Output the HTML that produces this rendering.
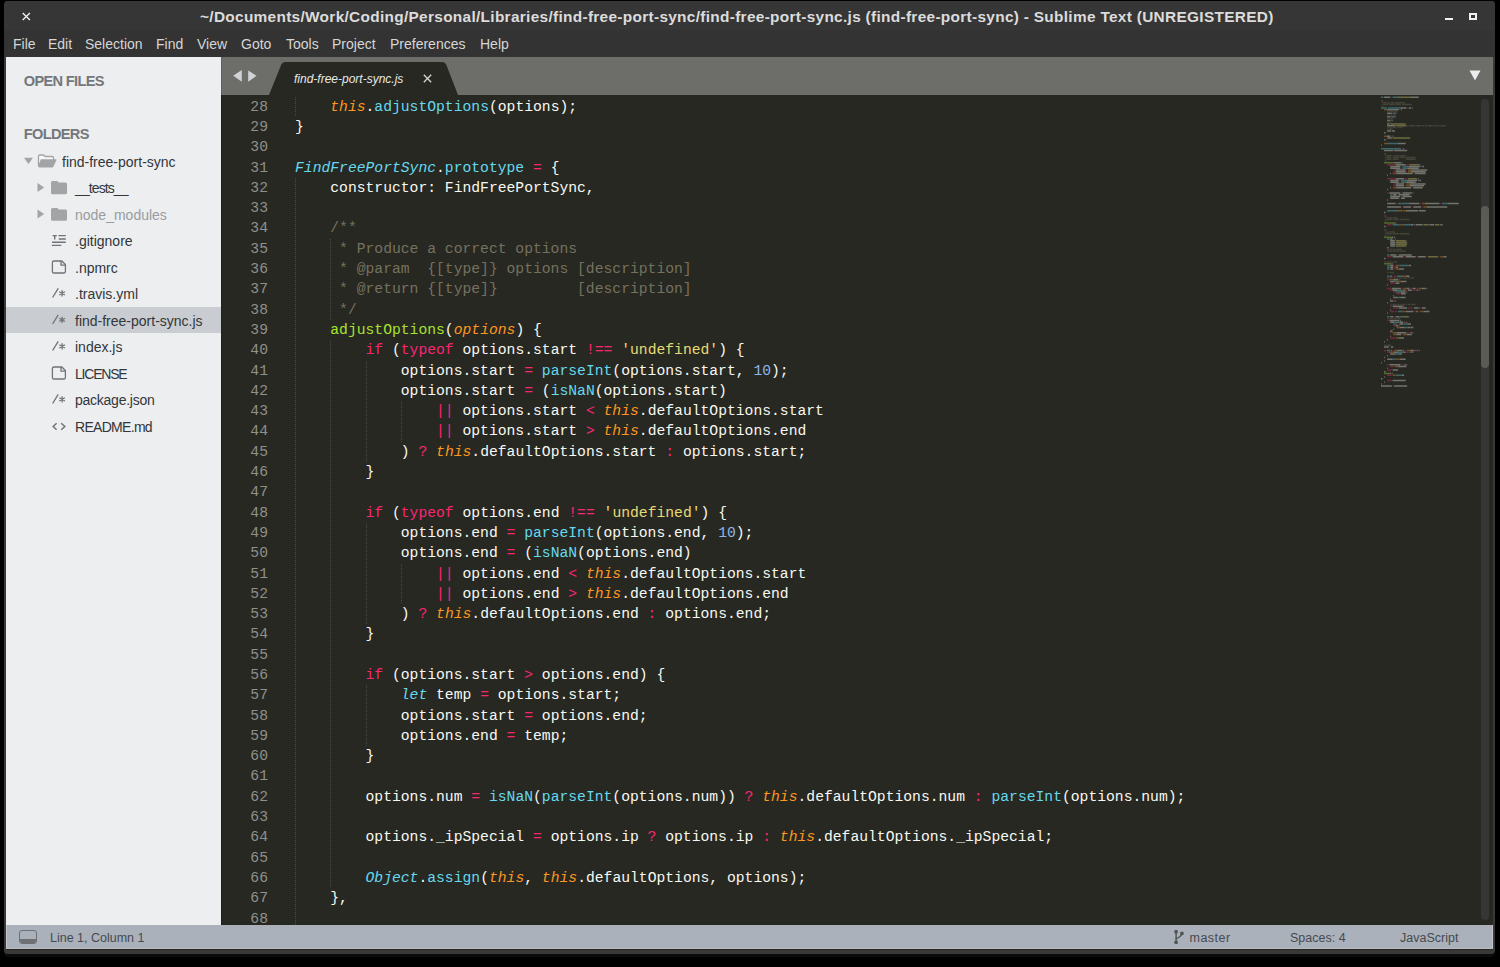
<!DOCTYPE html>
<html><head><meta charset="utf-8">
<style>
html,body{margin:0;padding:0;}
body{width:1500px;height:967px;background:#000;position:relative;overflow:hidden;font-family:"Liberation Sans",sans-serif;}
.abs{position:absolute;}
#win{position:absolute;left:4px;top:1px;width:1491px;height:953px;background:#393939;border-radius:4px 4px 4px 4px;overflow:hidden;box-shadow:0 3px 0 #0b0b0b;}
#tbar{position:absolute;left:4px;top:1px;width:1491px;height:29px;background:#363636;border-radius:4px 4px 0 0;}
#mbar{position:absolute;left:4px;top:30px;width:1491px;height:27px;background:#333333;}
#title{position:absolute;left:200px;top:8px;font-weight:bold;font-size:15.4px;color:#dcdcdc;white-space:pre;letter-spacing:0.31px;}
.menu{position:absolute;top:36px;font-size:14px;color:#d6d6d6;white-space:pre;}
#sidebar{position:absolute;left:6px;top:57px;width:215px;height:868px;background:#eceef0;}
.sbh{position:absolute;left:23.8px;font-weight:bold;font-size:14.6px;color:#74777b;letter-spacing:-0.68px;white-space:pre;}
.item{position:absolute;font-size:14px;color:#33363a;white-space:pre;}
#sel{position:absolute;left:6px;top:307px;width:215px;height:26px;background:#c9cdd1;}
#editor{position:absolute;left:221px;top:57px;width:1272px;height:868px;background:#272822;}
#tabbar{position:absolute;left:221px;top:57px;width:1272px;height:38px;background:#6d6e69;}
#code{position:absolute;left:295px;top:96.7px;margin:0;font-family:"Liberation Mono",monospace;font-size:14.706px;line-height:20.3px;color:#f8f8f2;white-space:pre;}
#gutter{position:absolute;left:200px;width:68px;text-align:right;top:96.7px;margin:0;font-family:"Liberation Mono",monospace;font-size:14.706px;line-height:20.3px;color:#90908a;white-space:pre;}
.k{color:#f92672}.s{color:#e6db74}.n{color:#8fb4ea}.f{color:#66d9ef}.fi{color:#66d9ef;font-style:italic}
.t{color:#fd971f;font-style:italic}.g{color:#a6e22e}.c{color:#75715e}
.guide{position:absolute;width:1px;background-image:linear-gradient(to bottom,#4a4b44 50%,transparent 50%);background-size:1px 2px;}
#status{position:absolute;left:6px;top:925px;width:1485px;height:23px;background:#abb1ba;border-left:1px solid #c2c6cc;border-right:1px solid #c2c6cc;}
.st{position:absolute;top:930.5px;font-size:12.5px;color:#464a50;white-space:pre;}
</style></head>
<body>
<div id="win"></div><div id="tbar"></div><div id="mbar"></div>
<!-- title bar -->
<svg class="abs" style="left:21px;top:11px" width="11" height="11" viewBox="0 0 11 11"><path d="M1.7 1.9L8.9 9.1M8.9 1.9L1.7 9.1" stroke="#f0f0f0" stroke-width="1.35"/></svg>
<div id="title">~/Documents/Work/Coding/Personal/Libraries/find-free-port-sync/find-free-port-sync.js (find-free-port-sync) - Sublime Text (UNREGISTERED)</div>
<div class="abs" style="left:1445px;top:18px;width:8px;height:2px;background:#f0f0f0"></div>
<div class="abs" style="left:1469px;top:12.8px;width:4px;height:3.6px;border:2px solid #f0f0f0"></div>
<!-- menu -->
<div class="menu" style="left:13px">File</div>
<div class="menu" style="left:48px">Edit</div>
<div class="menu" style="left:85px">Selection</div>
<div class="menu" style="left:156px">Find</div>
<div class="menu" style="left:197px">View</div>
<div class="menu" style="left:241px">Goto</div>
<div class="menu" style="left:286px">Tools</div>
<div class="menu" style="left:332px">Project</div>
<div class="menu" style="left:390px">Preferences</div>
<div class="menu" style="left:480px">Help</div>
<!-- sidebar -->
<div id="sidebar"></div>
<div id="sel"></div>
<div class="sbh" style="top:73.2px">OPEN FILES</div>
<div class="sbh" style="top:126.2px">FOLDERS</div>
<!-- tree -->
<svg class="abs" style="left:0;top:0" width="221" height="450">
  <g fill="#a3a4a5">
    <path d="M24 157.8L33 157.8L28.5 164Z"/>
    <path d="M37.5 183L44.2 187.4L37.5 191.9Z"/>
    <path d="M37.5 209.6L44.2 214L37.5 218.5Z"/>
    <!-- folders -->
    <path d="M51 182.5Q51 181 52.5 181L57.5 181L58.5 182.5L65.5 182.5Q67 182.5 67 184L67 192.8Q67 194.3 65.5 194.3L52.5 194.3Q51 194.3 51 192.8Z"/>
    <path d="M51 209.5Q51 208 52.5 208L57.5 208L58.5 209.5L65.5 209.5Q67 209.5 67 211L67 219.2Q67 220.7 65.5 220.7L52.5 220.7Q51 220.7 51 219.2Z"/>
  </g>
  <!-- open folder -->
  <path d="M38.5 166L38.5 156.5Q38.5 155 40 155L43.5 155L45 156.5L52 156.5Q53.5 156.5 53.5 158L53.5 160" fill="#f7f8f9" stroke="#a3a4a5" stroke-width="1.3"/>
  <path d="M40.8 159.3L55.8 159.3Q56.8 159.3 56.4 160.3L53.5 166.5Q53.1 167.4 52 167.4L39.5 167.4Q37.8 167.4 38.2 166Z" fill="#a3a4a5"/>
  <g stroke="#707377" fill="none" stroke-width="1.4" stroke-linecap="butt">
    <!-- gitignore -->
    <path d="M58.5 235.6L65.8 235.6M58.8 239L65.8 239M52 242.3L65.8 242.3M51.8 245.4L61.3 245.4"/>
    <path d="M52.6 235.6L56.8 235.6M54.7 235.6L54.7 239.5"/>
    <!-- file icons -->
    <path d="M52.4 262.5Q52.4 261 54 261L61.8 261L65.4 264.6L65.4 271.4Q65.4 273 63.8 273L54 273Q52.4 273 52.4 271.4Z" stroke-width="1.3"/>
    <path d="M61 261L61 265.2L65.4 265.2" stroke-width="1.3"/>
    <path d="M52.4 368.5Q52.4 367 54 367L61.8 367L65.4 370.6L65.4 377.4Q65.4 379 63.8 379L54 379Q52.4 379 52.4 377.4Z" stroke-width="1.3"/>
    <path d="M61 367L61 371.2L65.4 371.2" stroke-width="1.3"/>
    <!-- readme <> -->
    <path d="M56.6 423.2L53.2 426.5L56.6 429.8M61.2 423.2L64.8 426.5L61.2 429.8" stroke-width="1.5"/>
  </g>
  <g id="jsicon" stroke="#707377" fill="none" stroke-width="1.3">
    <path d="M52.6 297.5L58.2 288.4"/>
    <path d="M62.1 290.2L62.1 296.6M59.3 291.8L64.9 295M59.3 295L64.9 291.8"/>
  </g>
  <use href="#jsicon" y="26.5"/>
  <use href="#jsicon" y="53"/>
  <use href="#jsicon" y="106"/>
</svg>
<div class="item" style="left:62px;top:154px">find-free-port-sync</div>
<div class="item" style="left:75px;top:180px"><span style="letter-spacing:-0.9px">__tests__</span></div>
<div class="item" style="left:75px;top:207px;color:#9a9c9f">node_modules</div>
<div class="item" style="left:75px;top:233px">.gitignore</div>
<div class="item" style="left:75px;top:260px">.npmrc</div>
<div class="item" style="left:75px;top:286px">.travis.yml</div>
<div class="item" style="left:75px;top:313px">find-free-port-sync.js</div>
<div class="item" style="left:75px;top:339px">index.js</div>
<div class="item" style="left:75px;top:366px"><span style="letter-spacing:-1.2px">LICENSE</span></div>
<div class="item" style="left:75px;top:392px"><span style="letter-spacing:-0.25px">package.json</span></div>
<div class="item" style="left:75px;top:419px"><span style="letter-spacing:-0.7px">README.md</span></div>
<!-- editor -->
<div id="editor"></div>
<div id="tabbar"></div>
<div class="abs" style="left:221px;top:57px;width:1px;height:38px;background:#5d5f62"></div><div class="abs" style="left:221px;top:95px;width:1px;height:830px;background:#221f1b"></div>
<svg class="abs" style="left:221px;top:57px" width="1272" height="38">
  <path d="M48 38L60.5 7Q62 5 64.5 5L221 5Q223.5 5 225 7L237 38Z" fill="#272822"/>
  <path d="M12.2 18.8L20.8 13L20.8 24.8Z" fill="#d0d2d5"/>
  <path d="M27.2 13.4L35.5 18.8L27.2 24.8Z" fill="#d0d2d5"/>
  <path d="M202.8 17.8L210.2 25.2M210.2 17.8L202.8 25.2" stroke="#d5d5d3" stroke-width="1.3"/>
  <path d="M1248.5 13.5L1259.5 13.5L1254 23.5Z" fill="#ececec"/>
</svg>
<div class="abs" style="left:294px;top:72px;font-size:12px;font-style:italic;color:#e8e8e6;white-space:pre">find-free-port-sync.js</div>
<div class="guide" style="left:295.0px;top:96.7px;height:20.3px"></div>
<div class="guide" style="left:295.0px;top:177.9px;height:751.1px"></div>
<div class="guide" style="left:330.3px;top:238.8px;height:81.2px"></div>
<div class="guide" style="left:330.3px;top:340.3px;height:548.1px"></div>
<div class="guide" style="left:365.6px;top:360.6px;height:101.5px"></div>
<div class="guide" style="left:365.6px;top:523.0px;height:101.5px"></div>
<div class="guide" style="left:365.6px;top:685.4px;height:60.9px"></div>
<div class="guide" style="left:400.9px;top:401.2px;height:40.6px"></div>
<div class="guide" style="left:400.9px;top:563.6px;height:40.6px"></div>
<pre id="gutter">28
29
30
31
32
33
34
35
36
37
38
39
40
41
42
43
44
45
46
47
48
49
50
51
52
53
54
55
56
57
58
59
60
61
62
63
64
65
66
67
68</pre>
<pre id="code">    <span class="t">this</span>.<span class="f">adjustOptions</span>(options);
}

<span class="fi">FindFreePortSync</span>.<span class="f">prototype</span> <span class="k">=</span> {
    constructor: FindFreePortSync,

    <span class="c">/**</span>
    <span class="c"> * Produce a correct options</span>
    <span class="c"> * @param  {[type]} options [description]</span>
    <span class="c"> * @return {[type]}         [description]</span>
    <span class="c"> */</span>
    <span class="g">adjustOptions</span>(<span class="t">options</span>) {
        <span class="k">if</span> (<span class="k">typeof</span> options.start <span class="k">!==</span> <span class="s">'undefined'</span>) {
            options.start <span class="k">=</span> <span class="f">parseInt</span>(options.start, <span class="n">10</span>);
            options.start <span class="k">=</span> (<span class="f">isNaN</span>(options.start)
                <span class="k">||</span> options.start <span class="k">&lt;</span> <span class="t">this</span>.defaultOptions.start
                <span class="k">||</span> options.start <span class="k">&gt;</span> <span class="t">this</span>.defaultOptions.end
            ) <span class="k">?</span> <span class="t">this</span>.defaultOptions.start <span class="k">:</span> options.start;
        }

        <span class="k">if</span> (<span class="k">typeof</span> options.end <span class="k">!==</span> <span class="s">'undefined'</span>) {
            options.end <span class="k">=</span> <span class="f">parseInt</span>(options.end, <span class="n">10</span>);
            options.end <span class="k">=</span> (<span class="f">isNaN</span>(options.end)
                <span class="k">||</span> options.end <span class="k">&lt;</span> <span class="t">this</span>.defaultOptions.start
                <span class="k">||</span> options.end <span class="k">&gt;</span> <span class="t">this</span>.defaultOptions.end
            ) <span class="k">?</span> <span class="t">this</span>.defaultOptions.end <span class="k">:</span> options.end;
        }

        <span class="k">if</span> (options.start <span class="k">&gt;</span> options.end) {
            <span class="fi">let</span> temp <span class="k">=</span> options.start;
            options.start <span class="k">=</span> options.end;
            options.end <span class="k">=</span> temp;
        }

        options.num <span class="k">=</span> <span class="f">isNaN</span>(<span class="f">parseInt</span>(options.num)) <span class="k">?</span> <span class="t">this</span>.defaultOptions.num <span class="k">:</span> <span class="f">parseInt</span>(options.num);

        options._ipSpecial <span class="k">=</span> options.ip <span class="k">?</span> options.ip <span class="k">:</span> <span class="t">this</span>.defaultOptions._ipSpecial;

        <span class="fi">Object</span>.<span class="f">assign</span>(<span class="t">this</span>, <span class="t">this</span>.defaultOptions, options);
    },
</pre>
<svg class="abs" style="left:0;top:0" width="1500" height="967"><g opacity="0.36"><path fill="#f8f8f2" d="M1384.08 96.62h6.16v1.5h-6.16zM1397.94 96.62h0.77v1.5h-0.77zM1410.26 96.62h0.77v1.5h-0.77zM1411.03 96.62h0.77v1.5h-0.77zM1411.80 96.62h6.16v1.5h-6.16zM1417.96 96.62h0.77v1.5h-0.77zM1400.25 107.24h0.77v1.5h-0.77zM1401.02 107.24h5.39v1.5h-5.39zM1408.72 107.24h0.77v1.5h-0.77zM1409.49 107.24h0.77v1.5h-0.77zM1410.26 107.24h0.77v1.5h-0.77zM1411.80 107.24h0.77v1.5h-0.77zM1387.16 109.01h0.77v1.5h-0.77zM1387.93 109.01h10.78v1.5h-10.78zM1401.02 109.01h0.77v1.5h-0.77zM1387.16 112.55h3.85v1.5h-3.85zM1391.01 112.55h0.77v1.5h-0.77zM1395.63 112.55h0.77v1.5h-0.77zM1387.16 116.09h2.31v1.5h-2.31zM1389.47 116.09h0.77v1.5h-0.77zM1394.86 116.09h0.77v1.5h-0.77zM1387.16 119.63h2.31v1.5h-2.31zM1389.47 119.63h0.77v1.5h-0.77zM1391.78 119.63h0.77v1.5h-0.77zM1387.16 123.17h1.54v1.5h-1.54zM1388.70 123.17h0.77v1.5h-0.77zM1404.87 123.17h0.77v1.5h-0.77zM1387.16 124.94h7.70v1.5h-7.70zM1394.86 124.94h0.77v1.5h-0.77zM1405.64 124.94h0.77v1.5h-0.77zM1387.16 130.25h3.08v1.5h-3.08zM1390.24 130.25h0.77v1.5h-0.77zM1391.78 130.25h3.08v1.5h-3.08zM1384.08 132.02h0.77v1.5h-0.77zM1384.85 132.02h0.77v1.5h-0.77zM1387.16 135.56h0.77v1.5h-0.77zM1387.93 135.56h2.31v1.5h-2.31zM1392.55 135.56h0.77v1.5h-0.77zM1387.16 137.33h3.85v1.5h-3.85zM1391.01 137.33h0.77v1.5h-0.77zM1384.08 139.10h0.77v1.5h-0.77zM1384.85 139.10h0.77v1.5h-0.77zM1387.16 142.64h0.77v1.5h-0.77zM1397.94 142.64h0.77v1.5h-0.77zM1398.71 142.64h5.39v1.5h-5.39zM1404.10 142.64h0.77v1.5h-0.77zM1404.87 142.64h0.77v1.5h-0.77zM1381.00 144.41h0.77v1.5h-0.77zM1393.32 147.95h0.77v1.5h-0.77zM1403.33 147.95h0.77v1.5h-0.77zM1384.08 149.72h8.47v1.5h-8.47zM1392.55 149.72h0.77v1.5h-0.77zM1394.09 149.72h12.32v1.5h-12.32zM1406.41 149.72h0.77v1.5h-0.77zM1394.09 162.11h0.77v1.5h-0.77zM1394.86 162.11h5.39v1.5h-5.39zM1400.25 162.11h0.77v1.5h-0.77zM1401.79 162.11h0.77v1.5h-0.77zM1389.47 163.88h0.77v1.5h-0.77zM1395.63 163.88h5.39v1.5h-5.39zM1401.02 163.88h0.77v1.5h-0.77zM1401.79 163.88h3.85v1.5h-3.85zM1417.96 163.88h0.77v1.5h-0.77zM1419.50 163.88h0.77v1.5h-0.77zM1390.24 165.65h5.39v1.5h-5.39zM1395.63 165.65h0.77v1.5h-0.77zM1396.40 165.65h3.85v1.5h-3.85zM1408.72 165.65h0.77v1.5h-0.77zM1409.49 165.65h5.39v1.5h-5.39zM1414.88 165.65h0.77v1.5h-0.77zM1415.65 165.65h3.85v1.5h-3.85zM1419.50 165.65h0.77v1.5h-0.77zM1422.58 165.65h0.77v1.5h-0.77zM1423.35 165.65h0.77v1.5h-0.77zM1390.24 167.42h5.39v1.5h-5.39zM1395.63 167.42h0.77v1.5h-0.77zM1396.40 167.42h3.85v1.5h-3.85zM1402.56 167.42h0.77v1.5h-0.77zM1407.18 167.42h0.77v1.5h-0.77zM1407.95 167.42h5.39v1.5h-5.39zM1413.34 167.42h0.77v1.5h-0.77zM1414.11 167.42h3.85v1.5h-3.85zM1417.96 167.42h0.77v1.5h-0.77zM1395.63 169.19h5.39v1.5h-5.39zM1401.02 169.19h0.77v1.5h-0.77zM1401.79 169.19h3.85v1.5h-3.85zM1411.03 169.19h0.77v1.5h-0.77zM1411.80 169.19h10.78v1.5h-10.78zM1422.58 169.19h0.77v1.5h-0.77zM1423.35 169.19h3.85v1.5h-3.85zM1395.63 170.96h5.39v1.5h-5.39zM1401.02 170.96h0.77v1.5h-0.77zM1401.79 170.96h3.85v1.5h-3.85zM1411.03 170.96h0.77v1.5h-0.77zM1411.80 170.96h10.78v1.5h-10.78zM1422.58 170.96h0.77v1.5h-0.77zM1423.35 170.96h2.31v1.5h-2.31zM1390.24 172.73h0.77v1.5h-0.77zM1396.40 172.73h0.77v1.5h-0.77zM1397.17 172.73h10.78v1.5h-10.78zM1407.95 172.73h0.77v1.5h-0.77zM1408.72 172.73h3.85v1.5h-3.85zM1414.88 172.73h5.39v1.5h-5.39zM1420.27 172.73h0.77v1.5h-0.77zM1421.04 172.73h3.85v1.5h-3.85zM1424.89 172.73h0.77v1.5h-0.77zM1387.16 174.50h0.77v1.5h-0.77zM1389.47 178.04h0.77v1.5h-0.77zM1395.63 178.04h5.39v1.5h-5.39zM1401.02 178.04h0.77v1.5h-0.77zM1401.79 178.04h2.31v1.5h-2.31zM1416.42 178.04h0.77v1.5h-0.77zM1417.96 178.04h0.77v1.5h-0.77zM1390.24 179.81h5.39v1.5h-5.39zM1395.63 179.81h0.77v1.5h-0.77zM1396.40 179.81h2.31v1.5h-2.31zM1407.18 179.81h0.77v1.5h-0.77zM1407.95 179.81h5.39v1.5h-5.39zM1413.34 179.81h0.77v1.5h-0.77zM1414.11 179.81h2.31v1.5h-2.31zM1416.42 179.81h0.77v1.5h-0.77zM1419.50 179.81h0.77v1.5h-0.77zM1420.27 179.81h0.77v1.5h-0.77zM1390.24 181.58h5.39v1.5h-5.39zM1395.63 181.58h0.77v1.5h-0.77zM1396.40 181.58h2.31v1.5h-2.31zM1401.02 181.58h0.77v1.5h-0.77zM1405.64 181.58h0.77v1.5h-0.77zM1406.41 181.58h5.39v1.5h-5.39zM1411.80 181.58h0.77v1.5h-0.77zM1412.57 181.58h2.31v1.5h-2.31zM1414.88 181.58h0.77v1.5h-0.77zM1395.63 183.35h5.39v1.5h-5.39zM1401.02 183.35h0.77v1.5h-0.77zM1401.79 183.35h2.31v1.5h-2.31zM1409.49 183.35h0.77v1.5h-0.77zM1410.26 183.35h10.78v1.5h-10.78zM1421.04 183.35h0.77v1.5h-0.77zM1421.81 183.35h3.85v1.5h-3.85zM1395.63 185.12h5.39v1.5h-5.39zM1401.02 185.12h0.77v1.5h-0.77zM1401.79 185.12h2.31v1.5h-2.31zM1409.49 185.12h0.77v1.5h-0.77zM1410.26 185.12h10.78v1.5h-10.78zM1421.04 185.12h0.77v1.5h-0.77zM1421.81 185.12h2.31v1.5h-2.31zM1390.24 186.89h0.77v1.5h-0.77zM1396.40 186.89h0.77v1.5h-0.77zM1397.17 186.89h10.78v1.5h-10.78zM1407.95 186.89h0.77v1.5h-0.77zM1408.72 186.89h2.31v1.5h-2.31zM1413.34 186.89h5.39v1.5h-5.39zM1418.73 186.89h0.77v1.5h-0.77zM1419.50 186.89h2.31v1.5h-2.31zM1421.81 186.89h0.77v1.5h-0.77zM1387.16 188.66h0.77v1.5h-0.77zM1389.47 192.20h0.77v1.5h-0.77zM1390.24 192.20h5.39v1.5h-5.39zM1395.63 192.20h0.77v1.5h-0.77zM1396.40 192.20h3.85v1.5h-3.85zM1402.56 192.20h5.39v1.5h-5.39zM1407.95 192.20h0.77v1.5h-0.77zM1408.72 192.20h2.31v1.5h-2.31zM1411.03 192.20h0.77v1.5h-0.77zM1412.57 192.20h0.77v1.5h-0.77zM1393.32 193.97h3.08v1.5h-3.08zM1398.71 193.97h5.39v1.5h-5.39zM1404.10 193.97h0.77v1.5h-0.77zM1404.87 193.97h3.85v1.5h-3.85zM1408.72 193.97h0.77v1.5h-0.77zM1390.24 195.74h5.39v1.5h-5.39zM1395.63 195.74h0.77v1.5h-0.77zM1396.40 195.74h3.85v1.5h-3.85zM1402.56 195.74h5.39v1.5h-5.39zM1407.95 195.74h0.77v1.5h-0.77zM1408.72 195.74h2.31v1.5h-2.31zM1411.03 195.74h0.77v1.5h-0.77zM1390.24 197.51h5.39v1.5h-5.39zM1395.63 197.51h0.77v1.5h-0.77zM1396.40 197.51h2.31v1.5h-2.31zM1401.02 197.51h3.08v1.5h-3.08zM1404.10 197.51h0.77v1.5h-0.77zM1387.16 199.28h0.77v1.5h-0.77zM1387.16 202.82h5.39v1.5h-5.39zM1392.55 202.82h0.77v1.5h-0.77zM1393.32 202.82h2.31v1.5h-2.31zM1401.79 202.82h0.77v1.5h-0.77zM1408.72 202.82h0.77v1.5h-0.77zM1409.49 202.82h5.39v1.5h-5.39zM1414.88 202.82h0.77v1.5h-0.77zM1415.65 202.82h2.31v1.5h-2.31zM1417.96 202.82h0.77v1.5h-0.77zM1418.73 202.82h0.77v1.5h-0.77zM1424.89 202.82h0.77v1.5h-0.77zM1425.66 202.82h10.78v1.5h-10.78zM1436.44 202.82h0.77v1.5h-0.77zM1437.21 202.82h2.31v1.5h-2.31zM1447.99 202.82h0.77v1.5h-0.77zM1448.76 202.82h5.39v1.5h-5.39zM1454.15 202.82h0.77v1.5h-0.77zM1454.92 202.82h2.31v1.5h-2.31zM1457.23 202.82h0.77v1.5h-0.77zM1458.00 202.82h0.77v1.5h-0.77zM1387.16 206.36h5.39v1.5h-5.39zM1392.55 206.36h0.77v1.5h-0.77zM1393.32 206.36h7.70v1.5h-7.70zM1403.33 206.36h5.39v1.5h-5.39zM1408.72 206.36h0.77v1.5h-0.77zM1409.49 206.36h1.54v1.5h-1.54zM1413.34 206.36h5.39v1.5h-5.39zM1418.73 206.36h0.77v1.5h-0.77zM1419.50 206.36h1.54v1.5h-1.54zM1426.43 206.36h0.77v1.5h-0.77zM1427.20 206.36h10.78v1.5h-10.78zM1437.98 206.36h0.77v1.5h-0.77zM1438.75 206.36h7.70v1.5h-7.70zM1446.45 206.36h0.77v1.5h-0.77zM1391.78 209.90h0.77v1.5h-0.77zM1397.17 209.90h0.77v1.5h-0.77zM1401.02 209.90h0.77v1.5h-0.77zM1405.64 209.90h0.77v1.5h-0.77zM1406.41 209.90h10.78v1.5h-10.78zM1417.19 209.90h0.77v1.5h-0.77zM1418.73 209.90h5.39v1.5h-5.39zM1424.12 209.90h0.77v1.5h-0.77zM1424.89 209.90h0.77v1.5h-0.77zM1384.08 211.67h0.77v1.5h-0.77zM1384.85 211.67h0.77v1.5h-0.77zM1393.32 222.29h0.77v1.5h-0.77zM1394.09 222.29h0.77v1.5h-0.77zM1395.63 222.29h0.77v1.5h-0.77zM1398.71 224.06h0.77v1.5h-0.77zM1402.56 224.06h0.77v1.5h-0.77zM1411.03 224.06h0.77v1.5h-0.77zM1411.80 224.06h0.77v1.5h-0.77zM1412.57 224.06h0.77v1.5h-0.77zM1414.11 224.06h0.77v1.5h-0.77zM1415.65 224.06h6.16v1.5h-6.16zM1421.81 224.06h0.77v1.5h-0.77zM1427.97 224.06h0.77v1.5h-0.77zM1429.51 224.06h3.85v1.5h-3.85zM1433.36 224.06h0.77v1.5h-0.77zM1440.29 224.06h0.77v1.5h-0.77zM1441.06 224.06h0.77v1.5h-0.77zM1441.83 224.06h0.77v1.5h-0.77zM1384.08 225.83h0.77v1.5h-0.77zM1384.85 225.83h0.77v1.5h-0.77zM1391.78 236.45h0.77v1.5h-0.77zM1392.55 236.45h0.77v1.5h-0.77zM1394.09 236.45h0.77v1.5h-0.77zM1390.24 238.22h2.31v1.5h-2.31zM1394.86 238.22h0.77v1.5h-0.77zM1390.24 239.99h3.85v1.5h-3.85zM1394.09 239.99h0.77v1.5h-0.77zM1405.64 239.99h0.77v1.5h-0.77zM1390.24 241.76h3.85v1.5h-3.85zM1394.09 241.76h0.77v1.5h-0.77zM1406.41 241.76h0.77v1.5h-0.77zM1390.24 243.53h4.62v1.5h-4.62zM1394.86 243.53h0.77v1.5h-0.77zM1406.41 243.53h0.77v1.5h-0.77zM1390.24 245.30h3.85v1.5h-3.85zM1394.09 245.30h0.77v1.5h-0.77zM1387.16 247.07h0.77v1.5h-0.77zM1387.93 247.07h0.77v1.5h-0.77zM1390.24 254.15h6.16v1.5h-6.16zM1398.71 254.15h5.39v1.5h-5.39zM1404.10 254.15h0.77v1.5h-0.77zM1404.87 254.15h6.16v1.5h-6.16zM1411.03 254.15h0.77v1.5h-0.77zM1392.55 255.92h0.77v1.5h-0.77zM1393.32 255.92h2.31v1.5h-2.31zM1395.63 255.92h0.77v1.5h-0.77zM1396.40 255.92h6.16v1.5h-6.16zM1402.56 255.92h0.77v1.5h-0.77zM1405.64 255.92h2.31v1.5h-2.31zM1407.95 255.92h0.77v1.5h-0.77zM1408.72 255.92h6.16v1.5h-6.16zM1414.88 255.92h0.77v1.5h-0.77zM1417.96 255.92h2.31v1.5h-2.31zM1420.27 255.92h0.77v1.5h-0.77zM1421.04 255.92h3.85v1.5h-3.85zM1424.89 255.92h0.77v1.5h-0.77zM1443.37 255.92h0.77v1.5h-0.77zM1444.14 255.92h1.54v1.5h-1.54zM1445.68 255.92h0.77v1.5h-0.77zM1384.08 257.69h0.77v1.5h-0.77zM1384.85 257.69h0.77v1.5h-0.77zM1389.47 263.00h0.77v1.5h-0.77zM1390.24 263.00h0.77v1.5h-0.77zM1391.78 263.00h0.77v1.5h-0.77zM1390.24 264.77h3.08v1.5h-3.08zM1398.71 264.77h0.77v1.5h-0.77zM1408.72 264.77h0.77v1.5h-0.77zM1409.49 264.77h0.77v1.5h-0.77zM1410.26 264.77h0.77v1.5h-0.77zM1390.24 266.54h3.08v1.5h-3.08zM1395.63 266.54h0.77v1.5h-0.77zM1396.40 266.54h0.77v1.5h-0.77zM1397.17 266.54h0.77v1.5h-0.77zM1390.24 268.31h3.08v1.5h-3.08zM1398.71 268.31h0.77v1.5h-0.77zM1399.48 268.31h3.85v1.5h-3.85zM1403.33 268.31h0.77v1.5h-0.77zM1390.24 275.39h1.54v1.5h-1.54zM1401.79 275.39h0.77v1.5h-0.77zM1405.64 275.39h0.77v1.5h-0.77zM1406.41 275.39h1.54v1.5h-1.54zM1407.95 275.39h0.77v1.5h-0.77zM1408.72 275.39h0.77v1.5h-0.77zM1389.47 278.93h0.77v1.5h-0.77zM1393.32 278.93h0.77v1.5h-0.77zM1394.09 278.93h3.08v1.5h-3.08zM1397.17 278.93h0.77v1.5h-0.77zM1398.71 278.93h0.77v1.5h-0.77zM1390.24 280.70h3.08v1.5h-3.08zM1393.32 280.70h0.77v1.5h-0.77zM1397.17 280.70h0.77v1.5h-0.77zM1401.02 280.70h0.77v1.5h-0.77zM1401.79 280.70h3.08v1.5h-3.08zM1404.87 280.70h0.77v1.5h-0.77zM1405.64 280.70h0.77v1.5h-0.77zM1395.63 282.47h3.08v1.5h-3.08zM1398.71 282.47h0.77v1.5h-0.77zM1387.16 284.24h0.77v1.5h-0.77zM1391.78 287.78h0.77v1.5h-0.77zM1392.55 287.78h3.08v1.5h-3.08zM1395.63 287.78h0.77v1.5h-0.77zM1396.40 287.78h4.62v1.5h-4.62zM1406.41 287.78h0.77v1.5h-0.77zM1407.18 287.78h2.31v1.5h-2.31zM1412.57 287.78h3.08v1.5h-3.08zM1421.81 287.78h0.77v1.5h-0.77zM1422.58 287.78h2.31v1.5h-2.31zM1424.89 287.78h0.77v1.5h-0.77zM1426.43 287.78h0.77v1.5h-0.77zM1392.55 289.55h0.77v1.5h-0.77zM1393.32 289.55h3.08v1.5h-3.08zM1396.40 289.55h0.77v1.5h-0.77zM1402.56 289.55h0.77v1.5h-0.77zM1407.95 289.55h3.08v1.5h-3.08zM1411.03 289.55h0.77v1.5h-0.77zM1417.19 289.55h0.77v1.5h-0.77zM1418.73 289.55h0.77v1.5h-0.77zM1395.63 291.32h0.77v1.5h-0.77zM1400.25 291.32h0.77v1.5h-0.77zM1401.02 291.32h3.08v1.5h-3.08zM1404.10 291.32h0.77v1.5h-0.77zM1404.87 291.32h0.77v1.5h-0.77zM1406.41 291.32h0.77v1.5h-0.77zM1401.02 293.09h3.85v1.5h-3.85zM1404.87 293.09h0.77v1.5h-0.77zM1393.32 294.86h0.77v1.5h-0.77zM1393.32 296.63h3.08v1.5h-3.08zM1396.40 296.63h0.77v1.5h-0.77zM1400.25 296.63h0.77v1.5h-0.77zM1401.02 296.63h3.08v1.5h-3.08zM1404.10 296.63h0.77v1.5h-0.77zM1404.87 296.63h0.77v1.5h-0.77zM1390.24 298.40h0.77v1.5h-0.77zM1390.24 300.17h3.08v1.5h-3.08zM1394.86 300.17h0.77v1.5h-0.77zM1387.16 301.94h0.77v1.5h-0.77zM1392.55 305.48h0.77v1.5h-0.77zM1393.32 305.48h3.08v1.5h-3.08zM1396.40 305.48h0.77v1.5h-0.77zM1397.17 305.48h4.62v1.5h-4.62zM1401.79 305.48h0.77v1.5h-0.77zM1403.33 305.48h0.77v1.5h-0.77zM1398.71 307.25h3.08v1.5h-3.08zM1401.79 307.25h0.77v1.5h-0.77zM1402.56 307.25h4.62v1.5h-4.62zM1414.11 307.25h3.08v1.5h-3.08zM1417.19 307.25h0.77v1.5h-0.77zM1418.73 307.25h0.77v1.5h-0.77zM1421.81 307.25h3.08v1.5h-3.08zM1424.89 307.25h0.77v1.5h-0.77zM1390.24 309.02h0.77v1.5h-0.77zM1401.79 310.79h0.77v1.5h-0.77zM1405.64 310.79h0.77v1.5h-0.77zM1406.41 310.79h2.31v1.5h-2.31zM1408.72 310.79h0.77v1.5h-0.77zM1409.49 310.79h3.85v1.5h-3.85zM1423.35 310.79h0.77v1.5h-0.77zM1424.12 310.79h3.85v1.5h-3.85zM1427.97 310.79h0.77v1.5h-0.77zM1428.74 310.79h0.77v1.5h-0.77zM1387.16 312.56h0.77v1.5h-0.77zM1390.24 316.10h3.08v1.5h-3.08zM1395.63 316.10h3.08v1.5h-3.08zM1398.71 316.10h0.77v1.5h-0.77zM1403.33 316.10h0.77v1.5h-0.77zM1407.18 316.10h0.77v1.5h-0.77zM1407.95 316.10h0.77v1.5h-0.77zM1389.47 319.64h0.77v1.5h-0.77zM1390.24 319.64h3.08v1.5h-3.08zM1393.32 319.64h0.77v1.5h-0.77zM1394.09 319.64h4.62v1.5h-4.62zM1398.71 319.64h0.77v1.5h-0.77zM1400.25 319.64h0.77v1.5h-0.77zM1390.24 321.41h3.08v1.5h-3.08zM1393.32 321.41h0.77v1.5h-0.77zM1399.48 321.41h0.77v1.5h-0.77zM1400.25 321.41h3.08v1.5h-3.08zM1406.41 321.41h0.77v1.5h-0.77zM1396.40 323.18h0.77v1.5h-0.77zM1399.48 323.18h3.08v1.5h-3.08zM1402.56 323.18h0.77v1.5h-0.77zM1407.18 323.18h0.77v1.5h-0.77zM1407.95 323.18h1.54v1.5h-1.54zM1409.49 323.18h0.77v1.5h-0.77zM1410.26 323.18h0.77v1.5h-0.77zM1395.63 324.95h0.77v1.5h-0.77zM1396.40 324.95h0.77v1.5h-0.77zM1397.17 324.95h0.77v1.5h-0.77zM1398.71 324.95h0.77v1.5h-0.77zM1399.48 326.72h0.77v1.5h-0.77zM1400.25 326.72h3.85v1.5h-3.85zM1404.10 326.72h0.77v1.5h-0.77zM1407.95 326.72h0.77v1.5h-0.77zM1408.72 326.72h0.77v1.5h-0.77zM1409.49 326.72h0.77v1.5h-0.77zM1411.03 326.72h0.77v1.5h-0.77zM1411.80 326.72h0.77v1.5h-0.77zM1412.57 326.72h0.77v1.5h-0.77zM1393.32 328.49h0.77v1.5h-0.77zM1390.24 330.26h0.77v1.5h-0.77zM1391.01 330.26h0.77v1.5h-0.77zM1391.78 330.26h0.77v1.5h-0.77zM1392.55 332.03h0.77v1.5h-0.77zM1396.40 332.03h0.77v1.5h-0.77zM1397.17 332.03h3.85v1.5h-3.85zM1401.02 332.03h0.77v1.5h-0.77zM1401.79 332.03h4.62v1.5h-4.62zM1411.03 332.03h0.77v1.5h-0.77zM1412.57 332.03h0.77v1.5h-0.77zM1396.40 333.80h0.77v1.5h-0.77zM1397.17 333.80h3.85v1.5h-3.85zM1406.41 333.80h0.77v1.5h-0.77zM1407.18 333.80h3.85v1.5h-3.85zM1411.03 333.80h0.77v1.5h-0.77zM1390.24 335.57h0.77v1.5h-0.77zM1398.71 337.34h0.77v1.5h-0.77zM1399.48 337.34h3.85v1.5h-3.85zM1403.33 337.34h0.77v1.5h-0.77zM1387.16 339.11h0.77v1.5h-0.77zM1384.08 340.88h0.77v1.5h-0.77zM1384.08 346.19h4.62v1.5h-4.62zM1391.01 346.19h0.77v1.5h-0.77zM1391.78 346.19h0.77v1.5h-0.77zM1392.55 346.19h0.77v1.5h-0.77zM1387.16 349.73h0.77v1.5h-0.77zM1391.01 349.73h0.77v1.5h-0.77zM1397.17 349.73h0.77v1.5h-0.77zM1397.94 349.73h3.85v1.5h-3.85zM1401.79 349.73h0.77v1.5h-0.77zM1403.33 349.73h0.77v1.5h-0.77zM1410.26 349.73h0.77v1.5h-0.77zM1411.03 349.73h2.31v1.5h-2.31zM1413.34 349.73h0.77v1.5h-0.77zM1414.88 349.73h0.77v1.5h-0.77zM1417.19 349.73h0.77v1.5h-0.77zM1418.73 349.73h0.77v1.5h-0.77zM1389.47 351.50h0.77v1.5h-0.77zM1393.32 351.50h0.77v1.5h-0.77zM1394.09 351.50h3.08v1.5h-3.08zM1397.17 351.50h0.77v1.5h-0.77zM1403.33 351.50h0.77v1.5h-0.77zM1404.10 351.50h0.77v1.5h-0.77zM1404.87 351.50h0.77v1.5h-0.77zM1411.03 351.50h0.77v1.5h-0.77zM1412.57 351.50h0.77v1.5h-0.77zM1390.24 353.27h4.62v1.5h-4.62zM1394.86 353.27h0.77v1.5h-0.77zM1398.71 353.27h0.77v1.5h-0.77zM1399.48 353.27h0.77v1.5h-0.77zM1400.25 353.27h0.77v1.5h-0.77zM1401.02 353.27h0.77v1.5h-0.77zM1387.16 355.04h0.77v1.5h-0.77zM1384.08 356.81h0.77v1.5h-0.77zM1387.16 358.58h4.62v1.5h-4.62zM1391.78 358.58h0.77v1.5h-0.77zM1395.63 358.58h0.77v1.5h-0.77zM1399.48 358.58h0.77v1.5h-0.77zM1400.25 358.58h3.85v1.5h-3.85zM1404.10 358.58h0.77v1.5h-0.77zM1404.87 358.58h0.77v1.5h-0.77zM1384.08 360.35h0.77v1.5h-0.77zM1381.00 362.12h0.77v1.5h-0.77zM1389.47 363.89h0.77v1.5h-0.77zM1390.24 363.89h4.62v1.5h-4.62zM1394.86 363.89h0.77v1.5h-0.77zM1395.63 363.89h4.62v1.5h-4.62zM1404.87 363.89h0.77v1.5h-0.77zM1406.41 363.89h0.77v1.5h-0.77zM1397.94 365.66h0.77v1.5h-0.77zM1398.71 365.66h2.31v1.5h-2.31zM1401.02 365.66h0.77v1.5h-0.77zM1401.79 365.66h3.85v1.5h-3.85zM1405.64 365.66h0.77v1.5h-0.77zM1387.16 367.43h0.77v1.5h-0.77zM1392.55 369.20h4.62v1.5h-4.62zM1397.17 369.20h0.77v1.5h-0.77zM1384.08 370.97h0.77v1.5h-0.77zM1384.85 370.97h0.77v1.5h-0.77zM1389.47 372.74h0.77v1.5h-0.77zM1390.24 372.74h0.77v1.5h-0.77zM1391.78 372.74h0.77v1.5h-0.77zM1395.63 374.51h0.77v1.5h-0.77zM1401.79 374.51h0.77v1.5h-0.77zM1402.56 374.51h0.77v1.5h-0.77zM1403.33 374.51h0.77v1.5h-0.77zM1384.08 376.28h0.77v1.5h-0.77zM1381.00 378.05h0.77v1.5h-0.77zM1381.77 378.05h0.77v1.5h-0.77zM1392.55 379.82h12.32v1.5h-12.32zM1404.87 379.82h0.77v1.5h-0.77zM1384.08 381.59h0.77v1.5h-0.77zM1381.00 383.36h0.77v1.5h-0.77zM1381.00 385.13h4.62v1.5h-4.62zM1385.62 385.13h0.77v1.5h-0.77zM1386.39 385.13h5.39v1.5h-5.39zM1394.09 385.13h12.32v1.5h-12.32zM1406.41 385.13h0.77v1.5h-0.77z"/><path fill="#f92672" d="M1391.01 96.62h0.77v1.5h-0.77zM1407.18 107.24h0.77v1.5h-0.77zM1399.48 109.01h0.77v1.5h-0.77zM1391.01 135.56h0.77v1.5h-0.77zM1401.79 147.95h0.77v1.5h-0.77zM1387.16 163.88h1.54v1.5h-1.54zM1390.24 163.88h4.62v1.5h-4.62zM1406.41 163.88h2.31v1.5h-2.31zM1401.02 165.65h0.77v1.5h-0.77zM1401.02 167.42h0.77v1.5h-0.77zM1393.32 169.19h1.54v1.5h-1.54zM1406.41 169.19h0.77v1.5h-0.77zM1393.32 170.96h1.54v1.5h-1.54zM1406.41 170.96h0.77v1.5h-0.77zM1391.78 172.73h0.77v1.5h-0.77zM1413.34 172.73h0.77v1.5h-0.77zM1387.16 178.04h1.54v1.5h-1.54zM1390.24 178.04h4.62v1.5h-4.62zM1404.87 178.04h2.31v1.5h-2.31zM1399.48 179.81h0.77v1.5h-0.77zM1399.48 181.58h0.77v1.5h-0.77zM1393.32 183.35h1.54v1.5h-1.54zM1404.87 183.35h0.77v1.5h-0.77zM1393.32 185.12h1.54v1.5h-1.54zM1404.87 185.12h0.77v1.5h-0.77zM1391.78 186.89h0.77v1.5h-0.77zM1411.80 186.89h0.77v1.5h-0.77zM1387.16 192.20h1.54v1.5h-1.54zM1401.02 192.20h0.77v1.5h-0.77zM1397.17 193.97h0.77v1.5h-0.77zM1401.02 195.74h0.77v1.5h-0.77zM1399.48 197.51h0.77v1.5h-0.77zM1396.40 202.82h0.77v1.5h-0.77zM1420.27 202.82h0.77v1.5h-0.77zM1440.29 202.82h0.77v1.5h-0.77zM1401.79 206.36h0.77v1.5h-0.77zM1411.80 206.36h0.77v1.5h-0.77zM1421.81 206.36h0.77v1.5h-0.77zM1387.16 224.06h4.62v1.5h-4.62zM1393.32 238.22h0.77v1.5h-0.77zM1397.17 254.15h0.77v1.5h-0.77zM1387.16 255.92h4.62v1.5h-4.62zM1404.10 255.92h0.77v1.5h-0.77zM1416.42 255.92h0.77v1.5h-0.77zM1426.43 255.92h0.77v1.5h-0.77zM1438.75 255.92h0.77v1.5h-0.77zM1394.09 264.77h0.77v1.5h-0.77zM1394.09 266.54h0.77v1.5h-0.77zM1394.09 268.31h0.77v1.5h-0.77zM1392.55 275.39h0.77v1.5h-0.77zM1394.09 275.39h2.31v1.5h-2.31zM1387.16 278.93h1.54v1.5h-1.54zM1390.24 282.47h4.62v1.5h-4.62zM1387.16 287.78h3.85v1.5h-3.85zM1401.79 287.78h0.77v1.5h-0.77zM1410.26 287.78h1.54v1.5h-1.54zM1416.42 287.78h1.54v1.5h-1.54zM1390.24 289.55h1.54v1.5h-1.54zM1406.41 289.55h0.77v1.5h-0.77zM1412.57 289.55h2.31v1.5h-2.31zM1415.65 289.55h0.77v1.5h-0.77zM1393.32 291.32h1.54v1.5h-1.54zM1396.40 293.09h3.85v1.5h-3.85zM1393.32 300.17h1.54v1.5h-1.54zM1390.24 305.48h1.54v1.5h-1.54zM1393.32 307.25h4.62v1.5h-4.62zM1407.95 307.25h2.31v1.5h-2.31zM1412.57 307.25h0.77v1.5h-0.77zM1420.27 307.25h0.77v1.5h-0.77zM1390.24 310.79h3.85v1.5h-3.85zM1394.86 310.79h2.31v1.5h-2.31zM1414.11 310.79h0.77v1.5h-0.77zM1418.73 310.79h0.77v1.5h-0.77zM1394.09 316.10h0.77v1.5h-0.77zM1387.16 319.64h1.54v1.5h-1.54zM1404.10 321.41h1.54v1.5h-1.54zM1397.94 323.18h0.77v1.5h-0.77zM1393.32 324.95h1.54v1.5h-1.54zM1390.24 332.03h1.54v1.5h-1.54zM1407.18 332.03h2.31v1.5h-2.31zM1401.79 333.80h0.77v1.5h-0.77zM1390.24 337.34h4.62v1.5h-4.62zM1389.47 346.19h0.77v1.5h-0.77zM1384.08 349.73h2.31v1.5h-2.31zM1392.55 349.73h0.77v1.5h-0.77zM1404.87 349.73h1.54v1.5h-1.54zM1415.65 349.73h1.54v1.5h-1.54zM1387.16 351.50h1.54v1.5h-1.54zM1406.41 351.50h2.31v1.5h-2.31zM1409.49 351.50h0.77v1.5h-0.77zM1387.16 363.89h1.54v1.5h-1.54zM1401.02 363.89h2.31v1.5h-2.31zM1390.24 365.66h3.85v1.5h-3.85zM1387.16 369.20h4.62v1.5h-4.62zM1387.16 374.51h4.62v1.5h-4.62zM1387.16 379.82h4.62v1.5h-4.62zM1392.55 385.13h0.77v1.5h-0.77z"/><path fill="#e6db74" d="M1398.71 96.62h11.55v1.5h-11.55zM1390.24 123.17h14.63v1.5h-14.63zM1396.40 124.94h9.24v1.5h-9.24zM1392.55 137.33h17.71v1.5h-17.71zM1409.49 163.88h8.47v1.5h-8.47zM1407.95 178.04h8.47v1.5h-8.47zM1423.35 224.06h4.62v1.5h-4.62zM1434.90 224.06h4.62v1.5h-4.62zM1395.63 239.99h10.01v1.5h-10.01zM1395.63 241.76h10.78v1.5h-10.78zM1396.40 243.53h10.01v1.5h-10.01zM1395.63 245.30h10.78v1.5h-10.78zM1427.97 255.92h10.01v1.5h-10.01zM1403.33 289.55h2.31v1.5h-2.31zM1415.65 310.79h2.31v1.5h-2.31zM1404.10 316.10h3.08v1.5h-3.08z"/><path fill="#8fb4ea" d="M1392.55 112.55h3.08v1.5h-3.08zM1391.01 116.09h3.85v1.5h-3.85zM1391.01 119.63h0.77v1.5h-0.77zM1421.04 165.65h1.54v1.5h-1.54zM1417.96 179.81h1.54v1.5h-1.54zM1416.42 289.55h0.77v1.5h-0.77zM1411.03 307.25h0.77v1.5h-0.77zM1417.96 307.25h0.77v1.5h-0.77zM1410.26 326.72h0.77v1.5h-0.77zM1410.26 332.03h0.77v1.5h-0.77zM1410.26 351.50h0.77v1.5h-0.77zM1404.10 363.89h0.77v1.5h-0.77z"/><path fill="#66d9ef" d="M1381.00 96.62h2.31v1.5h-2.31zM1392.55 96.62h5.39v1.5h-5.39zM1381.00 107.24h6.16v1.5h-6.16zM1387.93 107.24h12.32v1.5h-12.32zM1387.93 142.64h10.01v1.5h-10.01zM1381.00 147.95h12.32v1.5h-12.32zM1394.09 147.95h6.93v1.5h-6.93zM1402.56 165.65h6.16v1.5h-6.16zM1403.33 167.42h3.85v1.5h-3.85zM1401.02 179.81h6.16v1.5h-6.16zM1401.79 181.58h3.85v1.5h-3.85zM1390.24 193.97h2.31v1.5h-2.31zM1397.94 202.82h3.85v1.5h-3.85zM1402.56 202.82h6.16v1.5h-6.16zM1441.83 202.82h6.16v1.5h-6.16zM1387.16 209.90h4.62v1.5h-4.62zM1392.55 209.90h4.62v1.5h-4.62zM1392.55 224.06h6.16v1.5h-6.16zM1403.33 224.06h7.70v1.5h-7.70zM1387.16 238.22h2.31v1.5h-2.31zM1387.16 254.15h2.31v1.5h-2.31zM1387.16 264.77h2.31v1.5h-2.31zM1399.48 264.77h9.24v1.5h-9.24zM1387.16 266.54h2.31v1.5h-2.31zM1387.16 268.31h2.31v1.5h-2.31zM1387.16 275.39h2.31v1.5h-2.31zM1397.17 275.39h4.62v1.5h-4.62zM1394.09 280.70h3.08v1.5h-3.08zM1397.17 289.55h5.39v1.5h-5.39zM1396.40 291.32h3.85v1.5h-3.85zM1397.17 296.63h3.08v1.5h-3.08zM1397.94 310.79h3.85v1.5h-3.85zM1387.16 316.10h2.31v1.5h-2.31zM1399.48 316.10h3.85v1.5h-3.85zM1394.09 321.41h5.39v1.5h-5.39zM1393.32 323.18h2.31v1.5h-2.31zM1403.33 323.18h3.85v1.5h-3.85zM1404.87 326.72h3.08v1.5h-3.08zM1387.93 349.73h2.31v1.5h-2.31zM1397.94 351.50h5.39v1.5h-5.39zM1395.63 353.27h3.08v1.5h-3.08zM1392.55 358.58h3.08v1.5h-3.08zM1396.40 374.51h5.39v1.5h-5.39z"/><path fill="#fd971f" d="M1384.08 109.01h3.08v1.5h-3.08zM1384.08 135.56h3.08v1.5h-3.08zM1384.08 142.64h3.08v1.5h-3.08zM1407.95 169.19h3.08v1.5h-3.08zM1407.95 170.96h3.08v1.5h-3.08zM1393.32 172.73h3.08v1.5h-3.08zM1406.41 183.35h3.08v1.5h-3.08zM1406.41 185.12h3.08v1.5h-3.08zM1393.32 186.89h3.08v1.5h-3.08zM1421.81 202.82h3.08v1.5h-3.08zM1423.35 206.36h3.08v1.5h-3.08zM1397.94 209.90h3.08v1.5h-3.08zM1402.56 209.90h3.08v1.5h-3.08zM1399.48 224.06h3.08v1.5h-3.08zM1440.29 255.92h3.08v1.5h-3.08zM1395.63 264.77h3.08v1.5h-3.08zM1395.63 268.31h3.08v1.5h-3.08zM1402.56 275.39h3.08v1.5h-3.08zM1390.24 278.93h3.08v1.5h-3.08zM1397.94 280.70h3.08v1.5h-3.08zM1403.33 287.78h3.08v1.5h-3.08zM1418.73 287.78h3.08v1.5h-3.08zM1402.56 310.79h3.08v1.5h-3.08zM1420.27 310.79h3.08v1.5h-3.08zM1396.40 326.72h3.08v1.5h-3.08zM1393.32 332.03h3.08v1.5h-3.08zM1393.32 333.80h3.08v1.5h-3.08zM1403.33 333.80h3.08v1.5h-3.08zM1395.63 337.34h3.08v1.5h-3.08zM1394.09 349.73h3.08v1.5h-3.08zM1407.18 349.73h3.08v1.5h-3.08zM1390.24 351.50h3.08v1.5h-3.08zM1396.40 358.58h3.08v1.5h-3.08zM1394.86 365.66h3.08v1.5h-3.08zM1392.55 374.51h3.08v1.5h-3.08z"/><path fill="#a6e22e" d="M1384.08 162.11h10.01v1.5h-10.01zM1384.08 222.29h9.24v1.5h-9.24zM1384.08 236.45h7.70v1.5h-7.70zM1384.08 263.00h5.39v1.5h-5.39zM1384.08 372.74h5.39v1.5h-5.39z"/><path fill="#75715e" d="M1381.00 100.16h2.31v1.5h-2.31zM1381.77 101.93h0.77v1.5h-0.77zM1383.31 101.93h3.08v1.5h-3.08zM1387.16 101.93h3.08v1.5h-3.08zM1391.01 101.93h3.08v1.5h-3.08zM1394.86 101.93h10.01v1.5h-10.01zM1381.77 103.70h0.77v1.5h-0.77zM1383.31 103.70h4.62v1.5h-4.62zM1388.70 103.70h6.16v1.5h-6.16zM1395.63 103.70h5.39v1.5h-5.39zM1401.79 103.70h10.01v1.5h-10.01zM1381.77 105.47h1.54v1.5h-1.54zM1387.16 110.78h1.54v1.5h-1.54zM1389.47 110.78h3.85v1.5h-3.85zM1394.09 110.78h3.08v1.5h-3.08zM1387.16 114.32h1.54v1.5h-1.54zM1389.47 114.32h2.31v1.5h-2.31zM1392.55 114.32h3.08v1.5h-3.08zM1387.16 117.86h1.54v1.5h-1.54zM1389.47 117.86h3.85v1.5h-3.85zM1387.16 121.40h1.54v1.5h-1.54zM1389.47 121.40h1.54v1.5h-1.54zM1407.18 124.94h1.54v1.5h-1.54zM1409.49 124.94h5.39v1.5h-5.39zM1415.65 124.94h5.39v1.5h-5.39zM1421.81 124.94h2.31v1.5h-2.31zM1424.89 124.94h2.31v1.5h-2.31zM1427.97 124.94h5.39v1.5h-5.39zM1434.13 124.94h3.08v1.5h-3.08zM1437.98 124.94h1.54v1.5h-1.54zM1440.29 124.94h5.39v1.5h-5.39zM1387.16 126.71h1.54v1.5h-1.54zM1389.47 126.71h2.31v1.5h-2.31zM1392.55 126.71h3.08v1.5h-3.08zM1396.40 126.71h1.54v1.5h-1.54zM1398.71 126.71h3.85v1.5h-3.85zM1387.16 128.48h1.54v1.5h-1.54zM1389.47 128.48h3.08v1.5h-3.08zM1384.08 153.26h2.31v1.5h-2.31zM1384.85 155.03h0.77v1.5h-0.77zM1386.39 155.03h5.39v1.5h-5.39zM1392.55 155.03h0.77v1.5h-0.77zM1394.09 155.03h5.39v1.5h-5.39zM1400.25 155.03h5.39v1.5h-5.39zM1384.85 156.80h0.77v1.5h-0.77zM1386.39 156.80h4.62v1.5h-4.62zM1392.55 156.80h6.16v1.5h-6.16zM1399.48 156.80h5.39v1.5h-5.39zM1405.64 156.80h10.01v1.5h-10.01zM1384.85 158.57h0.77v1.5h-0.77zM1386.39 158.57h5.39v1.5h-5.39zM1392.55 158.57h6.16v1.5h-6.16zM1405.64 158.57h10.01v1.5h-10.01zM1384.85 160.34h1.54v1.5h-1.54zM1384.08 215.21h2.31v1.5h-2.31zM1384.85 216.98h0.77v1.5h-0.77zM1386.39 216.98h2.31v1.5h-2.31zM1389.47 216.98h3.08v1.5h-3.08zM1393.32 216.98h3.85v1.5h-3.85zM1384.85 218.75h0.77v1.5h-0.77zM1386.39 218.75h5.39v1.5h-5.39zM1392.55 218.75h6.16v1.5h-6.16zM1399.48 218.75h10.01v1.5h-10.01zM1384.85 220.52h1.54v1.5h-1.54zM1384.08 229.37h2.31v1.5h-2.31zM1384.85 231.14h0.77v1.5h-0.77zM1386.39 231.14h2.31v1.5h-2.31zM1389.47 231.14h5.39v1.5h-5.39zM1384.85 232.91h0.77v1.5h-0.77zM1386.39 232.91h5.39v1.5h-5.39zM1392.55 232.91h6.16v1.5h-6.16zM1399.48 232.91h10.01v1.5h-10.01zM1384.85 234.68h1.54v1.5h-1.54zM1387.16 248.84h1.54v1.5h-1.54zM1389.47 248.84h2.31v1.5h-2.31zM1392.55 248.84h2.31v1.5h-2.31zM1395.63 248.84h6.16v1.5h-6.16zM1387.16 250.61h1.54v1.5h-1.54zM1389.47 250.61h2.31v1.5h-2.31zM1392.55 250.61h3.85v1.5h-3.85zM1397.17 250.61h2.31v1.5h-2.31zM1400.25 250.61h5.39v1.5h-5.39zM1384.08 261.23h1.54v1.5h-1.54zM1386.39 261.23h3.08v1.5h-3.08zM1390.24 261.23h2.31v1.5h-2.31zM1393.32 261.23h3.85v1.5h-3.85zM1387.16 271.85h1.54v1.5h-1.54zM1389.47 271.85h4.62v1.5h-4.62zM1387.16 277.16h1.54v1.5h-1.54zM1389.47 277.16h3.08v1.5h-3.08zM1393.32 277.16h2.31v1.5h-2.31zM1396.40 277.16h2.31v1.5h-2.31zM1399.48 277.16h3.08v1.5h-3.08zM1403.33 277.16h3.85v1.5h-3.85zM1407.95 277.16h1.54v1.5h-1.54zM1410.26 277.16h3.85v1.5h-3.85zM1390.24 303.71h1.54v1.5h-1.54zM1392.55 303.71h3.85v1.5h-3.85zM1397.17 303.71h2.31v1.5h-2.31zM1400.25 303.71h4.62v1.5h-4.62zM1405.64 303.71h1.54v1.5h-1.54zM1407.95 303.71h2.31v1.5h-2.31zM1411.03 303.71h4.62v1.5h-4.62zM1387.16 317.87h1.54v1.5h-1.54zM1389.47 317.87h3.85v1.5h-3.85zM1394.09 317.87h2.31v1.5h-2.31zM1397.17 317.87h3.08v1.5h-3.08zM1384.08 344.42h1.54v1.5h-1.54zM1386.39 344.42h4.62v1.5h-4.62z"/></g></svg>
<div class="abs" style="left:1481px;top:99px;width:8px;height:820.5px;background:#363637;border-radius:4px"></div>
<div class="abs" style="left:1481px;top:206px;width:8px;height:162px;background:#5a5b55;border-radius:4px"></div>
<!-- status -->
<div id="status"></div>
<div class="abs" style="left:6px;top:948px;width:1487px;height:1px;background:#b7bcc4"></div><div class="abs" style="left:6px;top:949px;width:1487px;height:1px;background:#26271f"></div>
<div class="abs" style="left:19px;top:930px;width:16px;height:11.8px;border:1.2px solid #6e7073;border-radius:3px;box-sizing:content-box"></div>
<div class="abs" style="left:20px;top:939px;width:16.4px;height:4px;background:#6e7073;border-radius:0 0 2px 2px"></div>
<div class="st" style="left:50px">Line 1, Column 1</div>
<svg class="abs" style="left:1170px;top:928px" width="16" height="18"><g stroke="#525553" stroke-width="1.5" fill="none"><path d="M6.1 3.7L6.1 14.3"/><path d="M6.1 10.6Q10.8 9.2 11.9 5.4"/></g><g fill="#525553"><circle cx="6.1" cy="3.7" r="1.9"/><circle cx="11.9" cy="5.4" r="1.9"/><circle cx="6.1" cy="14.3" r="1.9"/></g></svg>
<div class="st" style="left:1189.5px;letter-spacing:0.5px">master</div>
<div class="st" style="left:1290px">Spaces: 4</div>
<div class="st" style="left:1400px">JavaScript</div>
</body></html>
